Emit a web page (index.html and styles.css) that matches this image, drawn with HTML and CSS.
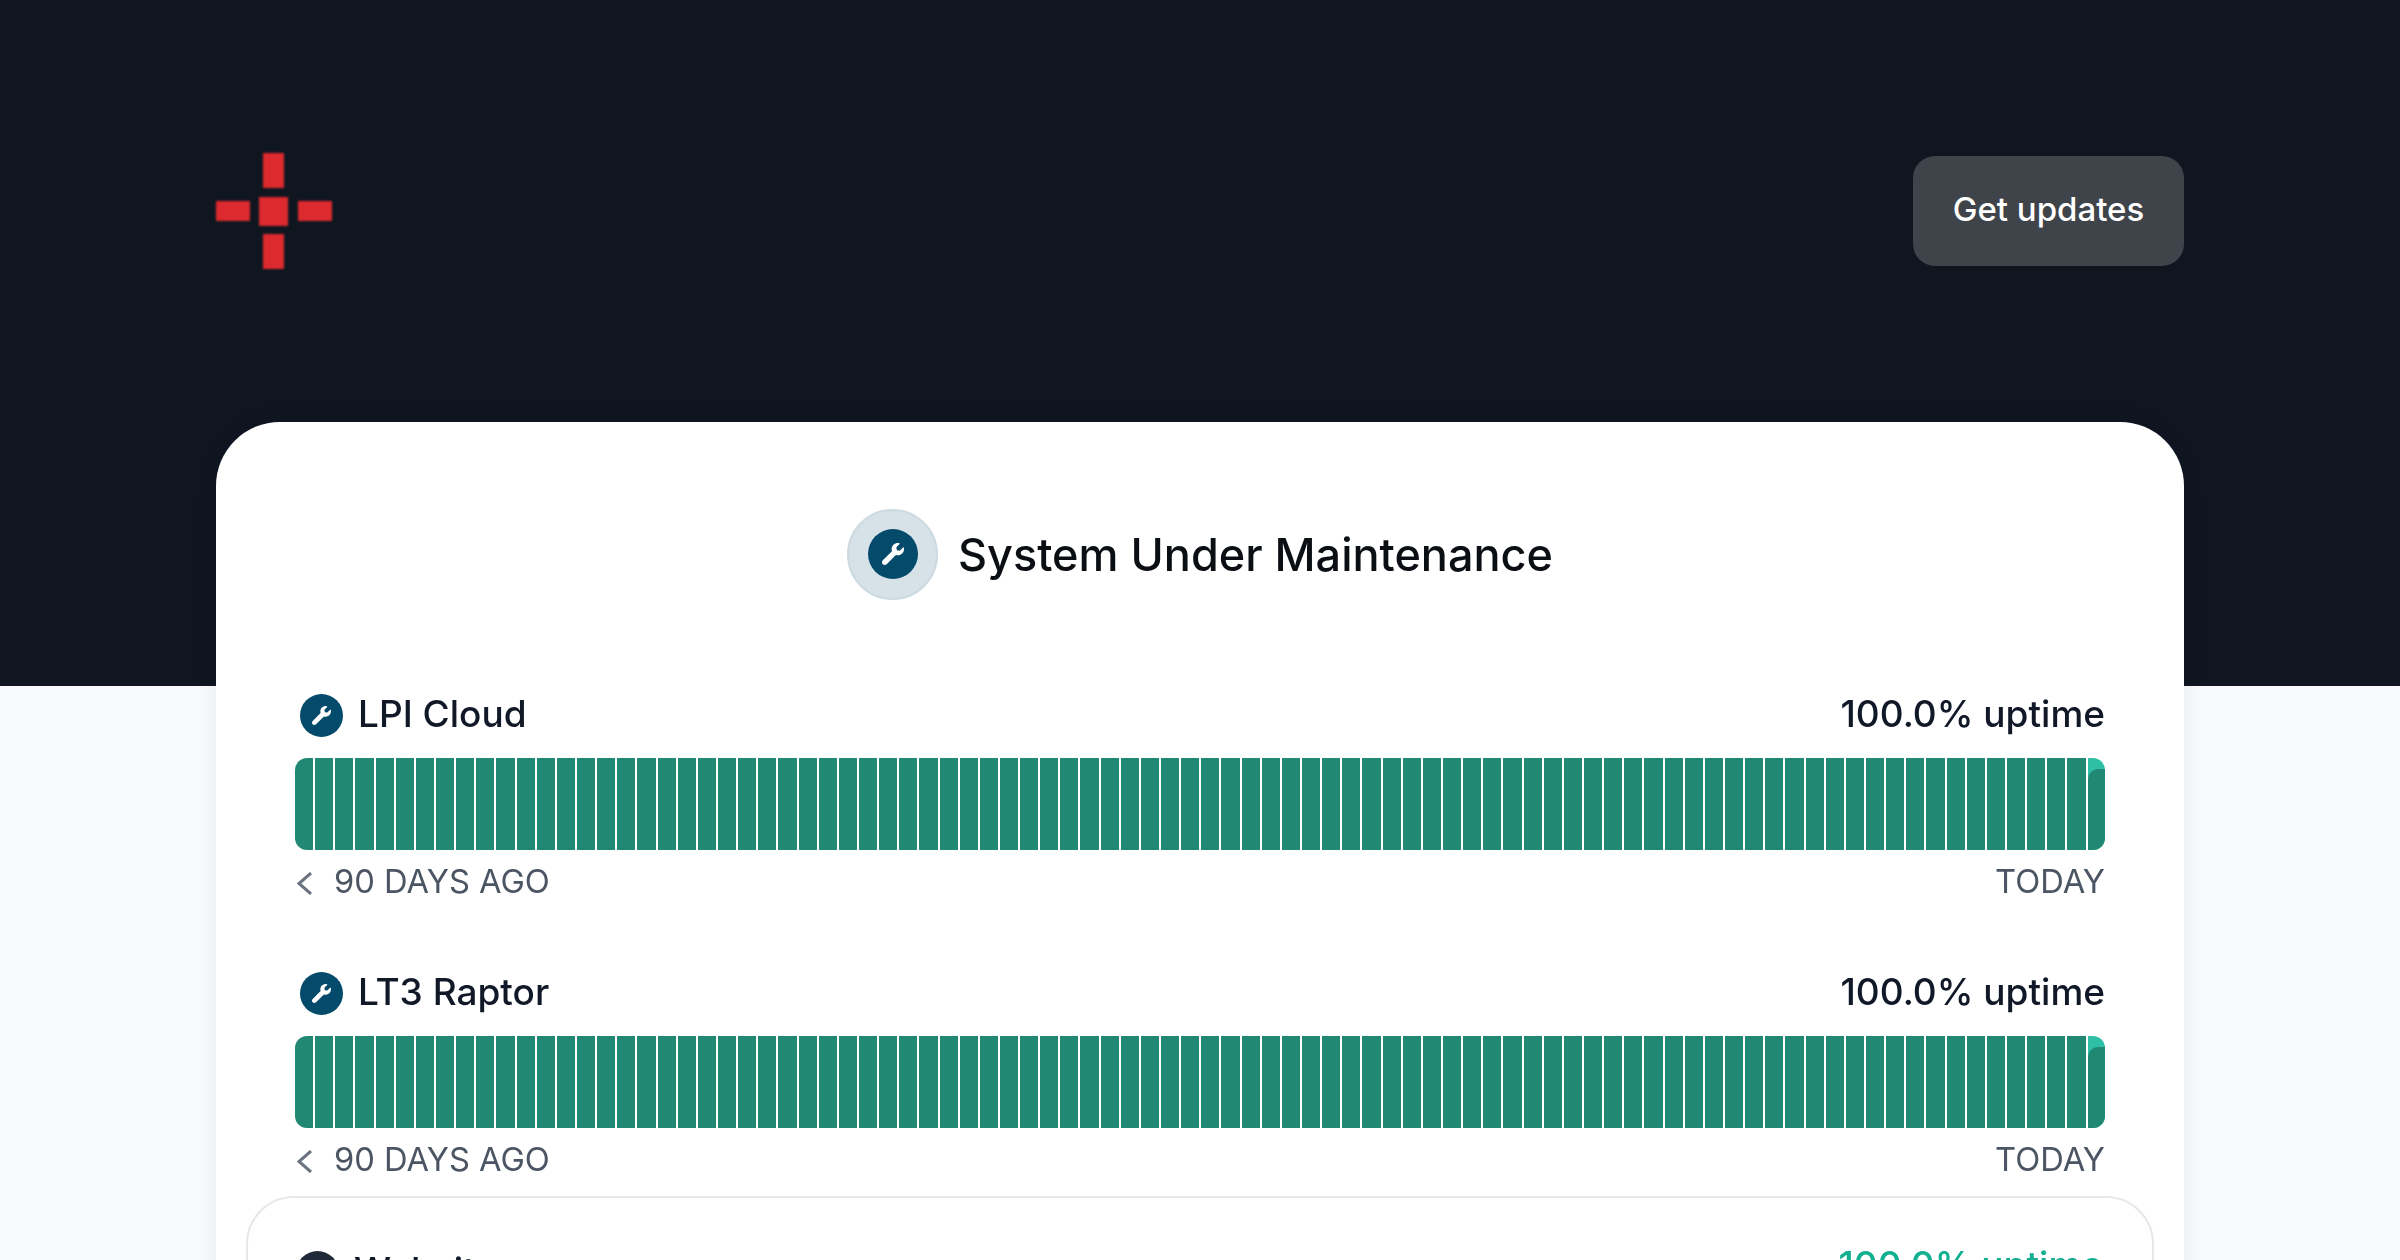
FILE: index.html
```html
<!DOCTYPE html>
<html lang="en">
<head>
<meta charset="utf-8">
<title>System Under Maintenance</title>
<link rel="stylesheet" href="styles.css">
</head>
<body>
<div class="hero">
  <header class="topbar">
    <svg class="logo" viewBox="0 0 116 116" aria-label="Logo">
      <rect x="47" y="0" width="21" height="35"/>
      <rect x="47" y="81" width="21" height="35"/>
      <rect x="0" y="48" width="34" height="20"/>
      <rect x="82" y="48" width="34" height="20"/>
      <rect x="43" y="44" width="29" height="29"/>
    </svg>
    <button class="updates">Get updates</button>
  </header>
</div>
<main class="card">
  <div class="status">
    <span class="halo"><span class="dot dot-lg"><svg viewBox="0 0 512 512"><use href="#wrench"/></svg></span></span>
    <h1>System Under Maintenance</h1>
  </div>

  <section class="service">
    <div class="service-head">
      <div class="name"><span class="dot"><svg viewBox="0 0 512 512"><use href="#wrench"/></svg></span>LPI Cloud</div>
      <div class="uptime">100.0% uptime</div>
    </div>
    <div class="bars" id="bars-1"></div>
    <div class="service-foot">
      <span class="ago"><svg class="chev" viewBox="0 0 15 23"><polyline points="14,1 2,11.5 14,22"/></svg>90 DAYS AGO</span>
      <span>TODAY</span>
    </div>
  </section>

  <section class="service">
    <div class="service-head">
      <div class="name"><span class="dot"><svg viewBox="0 0 512 512"><use href="#wrench"/></svg></span>LT3 Raptor</div>
      <div class="uptime">100.0% uptime</div>
    </div>
    <div class="bars" id="bars-2"></div>
    <div class="service-foot">
      <span class="ago"><svg class="chev" viewBox="0 0 15 23"><polyline points="14,1 2,11.5 14,22"/></svg>90 DAYS AGO</span>
      <span>TODAY</span>
    </div>
  </section>

  <section class="group">
    <div class="service-head">
      <div class="name"><span class="dot dot-dark"></span>Website</div>
      <div class="uptime uptime-ok">100.0% uptime</div>
    </div>
  </section>
</main>
<svg class="defs" aria-hidden="true"><defs><path id="wrench" fill="#fff" d="M507.73 109.1c-2.24-9.03-13.54-12.09-20.12-5.51l-74.36 74.36-67.88-11.31-11.31-67.88 74.36-74.36c6.62-6.62 3.43-17.9-5.66-20.16-47.38-11.74-99.55.91-136.58 37.93-39.64 39.64-50.55 97.1-34.05 147.2L18.74 402.76c-24.99 24.99-24.99 65.51 0 90.5 24.99 24.99 65.51 24.99 90.5 0l213.21-213.21c50.12 16.71 107.47 5.68 147.37-34.22 37.07-37.07 49.7-89.32 37.91-136.73z"/></defs></svg>
<script src="bars.js"></script>
</body>
</html>
```
FILE: styles.css
```css
* { box-sizing: border-box; }
html, body { margin: 0; height: 1260px; overflow: hidden; }
body {
  background: #f9fafb;
  font-family: Inter, "Liberation Sans", sans-serif;
  color: #111827;
  filter: blur(0.55px);
}
.hero { background: #0f1620; height: 686px; padding: 0 216px; }
.topbar { height: 422px; display: flex; justify-content: space-between; align-items: center; }
.logo { width: 116px; height: 116px; fill: #dc2a2e; display: block; filter: blur(0.8px); }
.updates {
  width: 271px; height: 110px; border: 0; border-radius: 22px;
  padding: 0 0 5px;
  background: #3f444b; color: #fff;
  font: 500 33px Inter, sans-serif;
}
.card {
  width: 1968px; height: 1100px; margin: -264px auto 0;
  background: #fff; border-radius: 64px;
  box-shadow: 0 0 24px rgba(17, 24, 39, .07);
  padding: 87px 79px 0;
  position: relative;
}
.status { display: flex; align-items: center; justify-content: center; gap: 20px; height: 90px; margin-bottom: 95px; }
.halo { width: 91px; height: 91px; border-radius: 50%; background: #d7e2e8; border: 2px solid #cddae1; display: flex; align-items: center; justify-content: center; }
h1 { margin: 0; font-size: 45px; font-weight: 500; color: #0b0f14; }
.dot { width: 43px; height: 43px; border-radius: 50%; background: #034a6b; display: flex; align-items: center; justify-content: center; flex: none; }
.dot svg { width: 19px; height: 19px; }
.dot-lg { width: 50px; height: 50px; }
.dot-lg svg { width: 22px; height: 22px; }
.dot-dark { background: #1f2937; }
.service { height: 278px; }
.service-head { display: flex; justify-content: space-between; align-items: center; height: 44px; font-size: 37px; font-weight: 500; }
.name { display: flex; align-items: center; gap: 15px; padding-left: 5px; }
.name, .uptime { line-height: 40px; padding-bottom: 5px; }
.name .dot { margin-bottom: -3px; }
.uptime { color: #111827; }
.uptime-ok { color: #12b090; }
.group .uptime-ok { padding-bottom: 17px; }
.bars { display: flex; gap: 2px; height: 92px; margin-top: 20px; border-radius: 12px; overflow: hidden; }
.bar { flex: 1; background: #218873; }
.bar-last { background: #2fbfa6; position: relative; overflow: hidden; }
.bar-last i { display: block; height: 81px; margin-top: 11px; background: #218873; border-radius: 10px 0 0 0; }
.service-foot { display: flex; justify-content: space-between; align-items: center; margin-top: 9px; font-size: 32.7px; line-height: 44px; color: #4b5563; }
.ago { display: flex; align-items: center; gap: 22px; padding-left: 2px; }
.chev { width: 15px; height: 23px; fill: none; stroke: #6b7280; stroke-width: 3; margin-top: 4px; }
.group { margin: -54px -49px 0; height: 200px; border: 2px solid #e5e7eb; border-radius: 48px; padding: 53px 49px 0 47px; }
.group .name { padding-left: 1px; }
.defs { position: absolute; width: 0; height: 0; }
```
FILE: bars.js
```js
for (const id of ["bars-1", "bars-2"]) {
  const host = document.getElementById(id);
  for (let i = 0; i < 90; i++) {
    const bar = document.createElement("div");
    bar.className = i === 89 ? "bar bar-last" : "bar";
    if (i === 89) bar.appendChild(document.createElement("i"));
    host.appendChild(bar);
  }
}
```
